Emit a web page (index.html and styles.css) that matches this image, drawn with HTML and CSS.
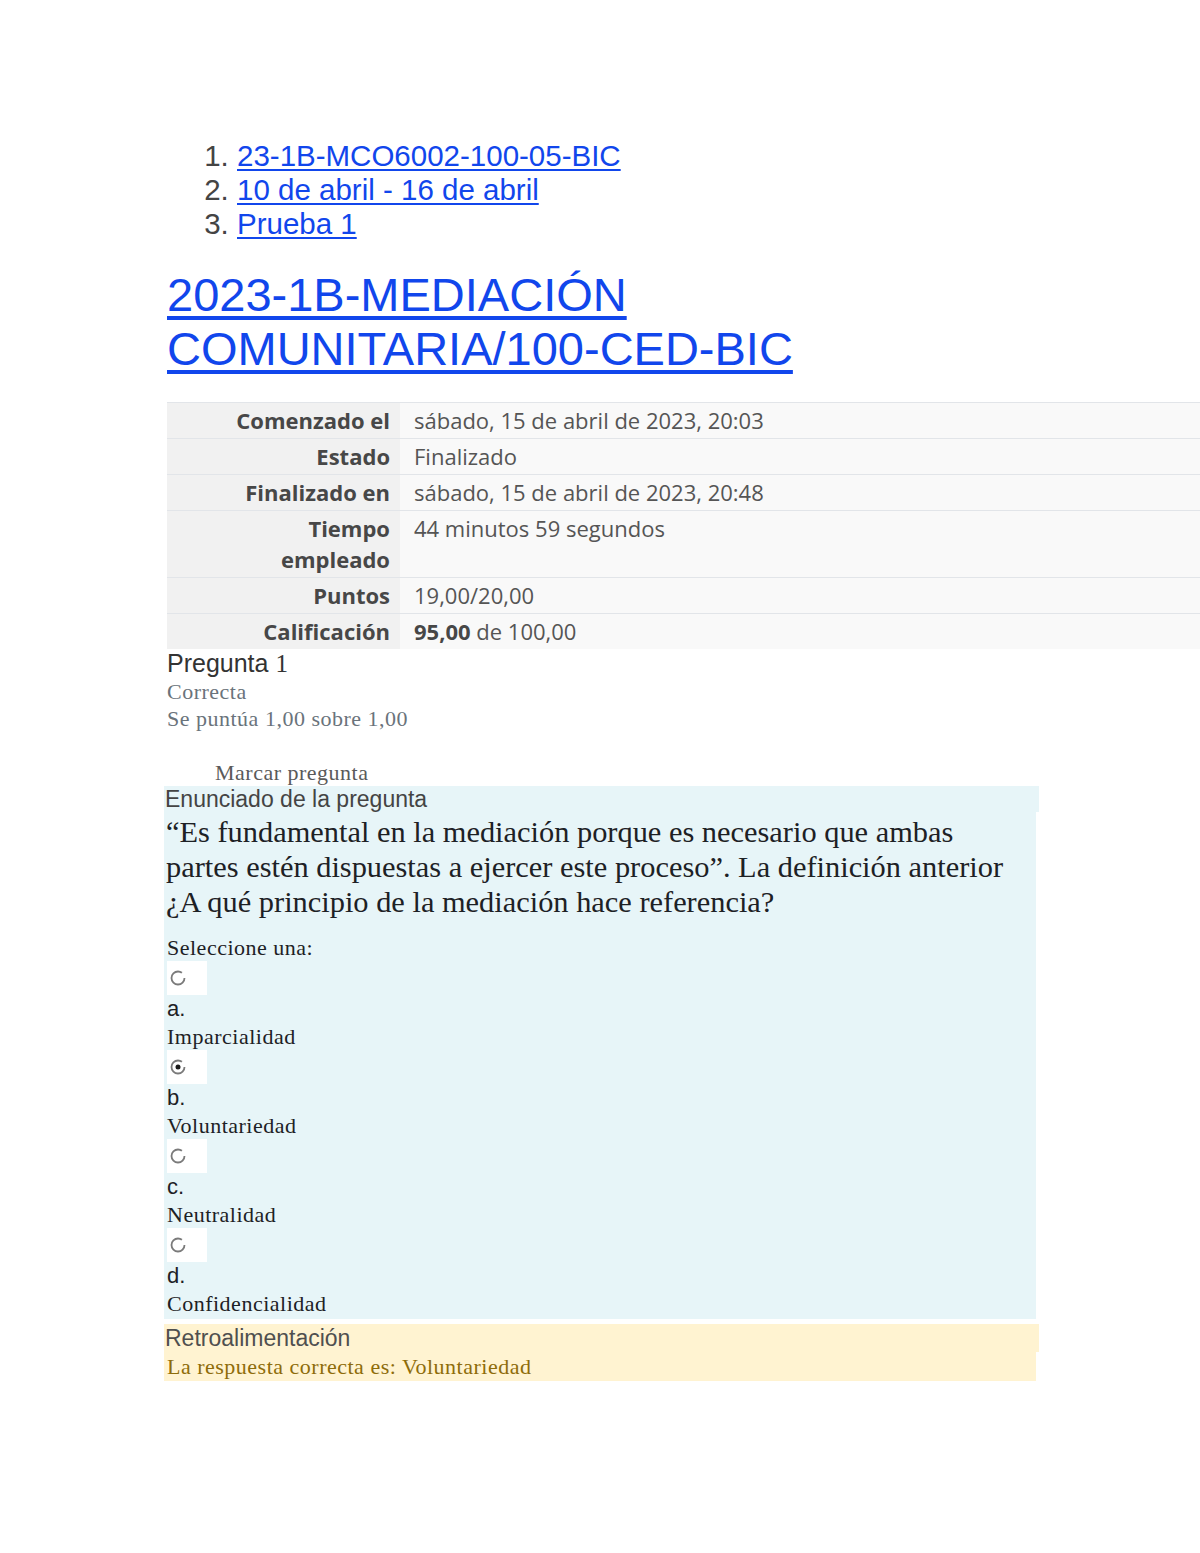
FILE: index.html
```html
<!DOCTYPE html>
<html lang="es">
<head>
<meta charset="utf-8">
<title>Prueba 1</title>
<link rel="stylesheet" href="styles.css">
</head>
<body>
<div class="page">
  <ol class="breadcrumb">
    <li><a href="#">23-1B-MCO6002-100-05-BIC</a></li>
    <li><a href="#">10 de abril - 16 de abril</a></li>
    <li><a href="#">Prueba 1</a></li>
  </ol>

  <h1 class="course-title"><a href="#">2023-1B-MEDIACIÓN COMUNITARIA/100-CED-BIC</a></h1>

  <table class="summary">
    <tr><th>Comenzado el</th><td>sábado, 15 de abril de 2023, 20:03</td></tr>
    <tr><th>Estado</th><td>Finalizado</td></tr>
    <tr><th>Finalizado en</th><td>sábado, 15 de abril de 2023, 20:48</td></tr>
    <tr><th>Tiempo empleado</th><td>44 minutos 59 segundos</td></tr>
    <tr><th>Puntos</th><td>19,00/20,00</td></tr>
    <tr><th>Calificación</th><td><b>95,00</b> de 100,00</td></tr>
  </table>

  <div class="q-info">
    <h3 class="q-no">Pregunta <span class="qno">1</span></h3>
    <div class="q-state">Correcta</div>
    <div class="q-grade">Se puntúa 1,00 sobre 1,00</div>
    <div class="q-flag">Marcar pregunta</div>
  </div>

  <div class="formulation">
    <h4 class="box-head">Enunciado de la pregunta</h4>
    <div class="qtext">
      <p>“Es fundamental en la mediación porque es necesario que ambas partes estén dispuestas a ejercer este proceso”. La definición anterior</p>
      <p>¿A qué principio de la mediación hace referencia?</p>
    </div>
    <div class="prompt">Seleccione una:</div>
    <div class="answers">
      <div class="option">
        <div class="radio-box"><svg class="radio" width="18" height="18" viewBox="0 0 18 18"><circle cx="9" cy="9" r="6.5" fill="#fff" stroke="#7a7a7a" stroke-width="1.8" stroke-dasharray="34 7"/></svg></div>
        <div class="letter">a.</div>
        <div class="label">Imparcialidad</div>
      </div>
      <div class="option">
        <div class="radio-box"><svg class="radio" width="18" height="18" viewBox="0 0 18 18"><circle cx="9" cy="9" r="6.5" fill="#fff" stroke="#7a7a7a" stroke-width="1.8" stroke-dasharray="34 7"/><circle cx="9" cy="9" r="2.5" fill="#1a1a1a"/></svg></div>
        <div class="letter">b.</div>
        <div class="label">Voluntariedad</div>
      </div>
      <div class="option">
        <div class="radio-box"><svg class="radio" width="18" height="18" viewBox="0 0 18 18"><circle cx="9" cy="9" r="6.5" fill="#fff" stroke="#7a7a7a" stroke-width="1.8" stroke-dasharray="34 7"/></svg></div>
        <div class="letter">c.</div>
        <div class="label">Neutralidad</div>
      </div>
      <div class="option">
        <div class="radio-box"><svg class="radio" width="18" height="18" viewBox="0 0 18 18"><circle cx="9" cy="9" r="6.5" fill="#fff" stroke="#7a7a7a" stroke-width="1.8" stroke-dasharray="34 7"/></svg></div>
        <div class="letter">d.</div>
        <div class="label">Confidencialidad</div>
      </div>
    </div>
  </div>

  <div class="feedback">
    <h4 class="box-head">Retroalimentación</h4>
    <div class="right-answer">La respuesta correcta es: Voluntariedad</div>
  </div>
</div>
</body>
</html>
```

FILE: styles.css
```css
html, body {
  margin: 0;
  padding: 0;
  background: #ffffff;
}

.page {
  padding: 0 0 0 164px;
  font-family: "Liberation Sans", Arial, sans-serif;
}

.breadcrumb {
  margin: 139px 0 0 0;
  padding: 0 0 0 73px;
  font-family: "Liberation Sans", Arial, sans-serif;
  font-size: 29.5px;
  line-height: 34px;
  color: #444444;
}

.breadcrumb a {
  color: #1146ec;
  text-decoration: underline;
  text-decoration-thickness: 2px;
  text-underline-offset: 3px;
}

.course-title {
  margin: 27px 0 0 3px;
  width: 640px;
  font-family: "Liberation Sans", Arial, sans-serif;
  font-weight: normal;
  font-size: 47px;
  line-height: 54px;
}

.course-title a {
  color: #1146ec;
  text-decoration: underline;
  text-decoration-thickness: 4px;
  text-underline-offset: 5px;
}

.summary {
  margin: 26px 0 0 3px;
  width: 1033px;
  border-collapse: collapse;
  font-family: "Open Sans", sans-serif;
  font-size: 22px;
  line-height: 31px;
}

.summary th,
.summary td {
  border-top: 1px solid #e2e5e9;
  padding: 2px 0;
  vertical-align: top;
}

.summary th {
  width: 163px;
  padding-left: 60px;
  padding-right: 10px;
  text-align: right;
  background: #f1f1f1;
  color: #474747;
  font-weight: bold;
}

.summary td {
  padding-left: 14px;
  background: #f9f9f9;
  color: #555555;
}

.summary td b {
  color: #474747;
}

.q-info {
  margin-left: 3px;
}

.q-no {
  margin: 0;
  font-family: "Liberation Sans", Arial, sans-serif;
  font-weight: normal;
  font-size: 25px;
  line-height: 28px;
  color: #333333;
}

.qno {
  font-family: "Liberation Serif", "Times New Roman", serif;
}

.q-state,
.q-grade {
  font-family: "Liberation Serif", "Times New Roman", serif;
  font-size: 22px;
  letter-spacing: 0.5px;
  line-height: 27px;
  color: #6a737b;
}

.q-flag {
  margin-top: 28px;
  padding-left: 48px;
  font-family: "Liberation Serif", "Times New Roman", serif;
  font-size: 22px;
  letter-spacing: 0.5px;
  line-height: 26px;
  color: #5a5a5a;
}

.formulation {
  width: 872px;
  background: #e7f5f8;
  padding-bottom: 2px;
}

.box-head {
  margin: 0 -3px 0 0;
  padding-left: 1px;
  font-family: "Liberation Sans", Arial, sans-serif;
  font-weight: normal;
  font-size: 23px;
  line-height: 26px;
  color: #444444;
}

.formulation .box-head {
  background: #e7f5f8;
}

.qtext {
  padding: 3px 20px 0 2px;
  font-family: "Liberation Serif", "Times New Roman", serif;
  font-size: 30.4px;
  line-height: 35px;
  color: #1d2125;
}

.qtext p {
  margin: 0;
}

.prompt {
  margin-top: 15px;
  padding-left: 3px;
  font-family: "Liberation Serif", "Times New Roman", serif;
  font-size: 22px;
  letter-spacing: 0.5px;
  line-height: 26px;
  color: #1d2125;
}

.option {
  padding-left: 3px;
}

.radio-box {
  width: 40px;
  height: 34px;
  background: #ffffff;
  display: flex;
  align-items: center;
}

.radio {
  display: block;
  margin-left: 2px;
}

.letter {
  font-family: "Liberation Sans", Arial, sans-serif;
  font-size: 22px;
  line-height: 28px;
  color: #1d2125;
}

.label {
  font-family: "Liberation Serif", "Times New Roman", serif;
  font-size: 22px;
  letter-spacing: 0.5px;
  line-height: 27px;
  color: #1d2125;
}

.feedback {
  margin-top: 5px;
  width: 872px;
  background: #fff3d1;
}

.feedback .box-head {
  background: #fff3d1;
  line-height: 28px;
  color: #4f4f4f;
}

.right-answer {
  padding-left: 3px;
  font-family: "Liberation Serif", "Times New Roman", serif;
  font-size: 22px;
  letter-spacing: 0.5px;
  line-height: 29px;
  color: #8e6c0a;
}
```
